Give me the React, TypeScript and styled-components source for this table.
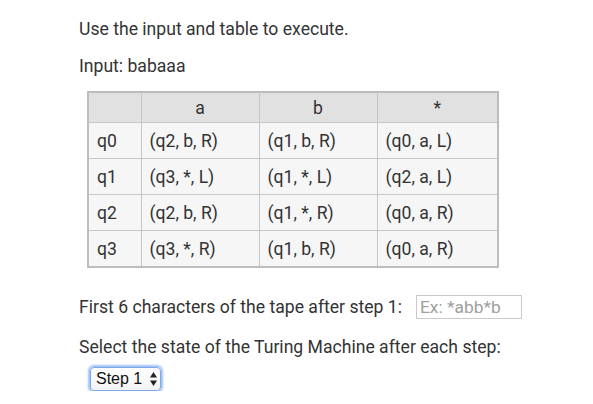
import React from "react";
import styled, { createGlobalStyle } from "styled-components";

const Global = createGlobalStyle`
  html, body { margin: 0; padding: 0; background: #fff; }
  body { font-family: Roboto, "Noto Sans", sans-serif; color: #333; font-size: 17.6px; }
`;

const Page = styled.div`
  padding: 19px 0 0 79px;
  width: 500px;
`;

const P = styled.p<{ $mt?: number }>`
  margin: ${(p) => p.$mt ?? 0}px 0 0 0;
  line-height: 21px;
  font-size: 17.6px;
`;

const Table = styled.table`
  border-collapse: collapse;
  table-layout: fixed;
  width: 410px;
  margin: 14px 0 0 8px;
  border: 2px solid #bdbdbd;
  font-size: 17.6px;
`;

const Th = styled.th`
  height: 29px;
  background: #e1e1e1;
  border: 1px solid #c6c6c6;
  font-weight: normal;
  text-align: center;
  padding: 0;
`;

const Td = styled.td`
  height: 35px;
  background: #f6f6f6;
  border: 1px solid #c6c6c6;
  padding: 0 0 0 8px;
  text-align: left;
`;

const Row = styled.div`
  display: flex;
  align-items: center;
  gap: 14px;
  margin-top: 27px;
`;

const Input = styled.input`
  width: 106px;
  height: 24px;
  box-sizing: border-box;
  border: 1px solid #cacaca;
  font-family: Roboto, sans-serif;
  font-size: 17.4px;
  padding: 0 3px;
  color: #333;
  &::placeholder { color: #a0a0a0; }
  outline: none;
`;

const SelectWrap = styled.div`
  margin: 9px 0 0 11px;
  display: inline-flex;
`;

const Select = styled.div`
  display: inline-flex;
  align-items: center;
  gap: 8px;
  height: 22px;
  padding: 0 3px 0 5px;
  border: 1px solid #7fa8e6;
  border-radius: 4px;
  box-shadow: 0 0 2px 2px #9fc2f7;
  background: linear-gradient(#ffffff, #f3f3f3);
  font-family: "Liberation Sans", Arial, sans-serif;
  font-size: 16px;
  color: #111;
`;

const rows = [
  ["q0", "(q2, b, R)", "(q1, b, R)", "(q0, a, L)"],
  ["q1", "(q3, *, L)", "(q1, *, L)", "(q2, a, L)"],
  ["q2", "(q2, b, R)", "(q1, *, R)", "(q0, a, R)"],
  ["q3", "(q3, *, R)", "(q1, b, R)", "(q0, a, R)"],
];

export default function App() {
  return (
    <>
      <Global />
      <Page>
        <P>Use the input and table to execute.</P>
        <P $mt={16}>Input: babaaa</P>
        <Table>
          <colgroup>
            <col style={{ width: 53 }} />
            <col style={{ width: 118 }} />
            <col style={{ width: 118 }} />
            <col style={{ width: 121 }} />
          </colgroup>
          <thead>
            <tr>
              <Th></Th>
              <Th>a</Th>
              <Th>b</Th>
              <Th>*</Th>
            </tr>
          </thead>
          <tbody>
            {rows.map((r) => (
              <tr key={r[0]}>
                {r.map((c, i) => (
                  <Td key={i}>{c}</Td>
                ))}
              </tr>
            ))}
          </tbody>
        </Table>
        <Row>
          <span>First 6 characters of the tape after step 1:</span>
          <Input placeholder="Ex: *abb*b" />
        </Row>
        <P $mt={18}>Select the state of the Turing Machine after each step:</P>
        <SelectWrap>
          <Select>
            <span>Step 1</span>
            <svg width="7" height="14" viewBox="0 0 7 14">
              <path d="M3.5 0 L7 5.5 L0 5.5 Z" fill="#222" />
              <path d="M3.5 14 L7 8.5 L0 8.5 Z" fill="#222" />
            </svg>
          </Select>
        </SelectWrap>
      </Page>
    </>
  );
}
